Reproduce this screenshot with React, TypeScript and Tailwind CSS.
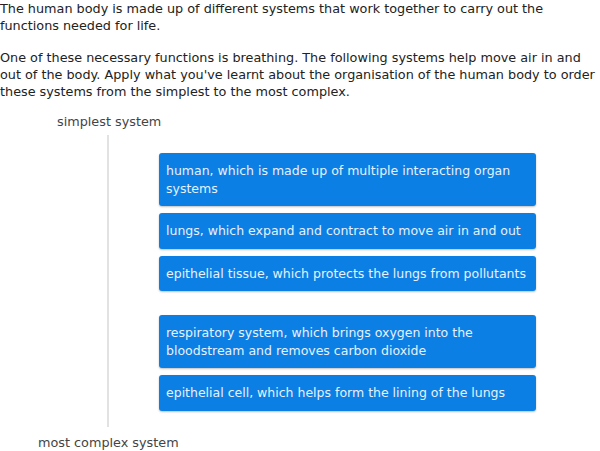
const items = [
  "human, which is made up of multiple interacting organ systems",
  "lungs, which expand and contract to move air in and out",
  "epithelial tissue, which protects the lungs from pollutants",
  "respiratory system, which brings oxygen into the bloodstream and removes carbon dioxide",
  "epithelial cell, which helps form the lining of the lungs",
];

function Card({ text }: { text: string }) {
  return (
    <div className="rounded-[3px] bg-[#0b7fe4] py-[9px] pl-[7px] pr-[4px] text-[12.5px] leading-[17.5px] text-[#e8f1fb] shadow-[0_1px_2px_rgba(0,0,0,0.25)]">
      {text}
    </div>
  );
}

export default function App() {
  return (
    <div className="h-[451px] w-[600px] overflow-hidden bg-white font-['DejaVu_Sans',sans-serif] text-[12.8px] leading-[17px] text-[#222]">
      <p>The human body is made up of different systems that work together to carry out the functions needed for life.</p>
      <p className="mt-[15px]">
        One of these necessary functions is breathing. The following systems help move air in and out of the body. Apply
        what you've learnt about the organisation of the human body to order these systems from the simplest to the most
        complex.
      </p>
      <p className="mt-[13px] pl-[57px] text-[#444]">simplest system</p>
      <div className="mt-[5px] flex">
        <div className="ml-[107px] w-[2px] bg-[#e2e2e2]" />
        <div className="ml-[50px] flex w-[377px] flex-col pb-[16px] pt-[18px]">
          <div className="flex flex-col gap-[7px]">
            {items.slice(0, 3).map((t) => (
              <Card key={t} text={t} />
            ))}
          </div>
          <div className="mt-[24px] flex flex-col gap-[7px]">
            {items.slice(3).map((t) => (
              <Card key={t} text={t} />
            ))}
          </div>
        </div>
      </div>
      <p className="mt-[7px] pl-[38px] text-[#444]">most complex system</p>
    </div>
  );
}
